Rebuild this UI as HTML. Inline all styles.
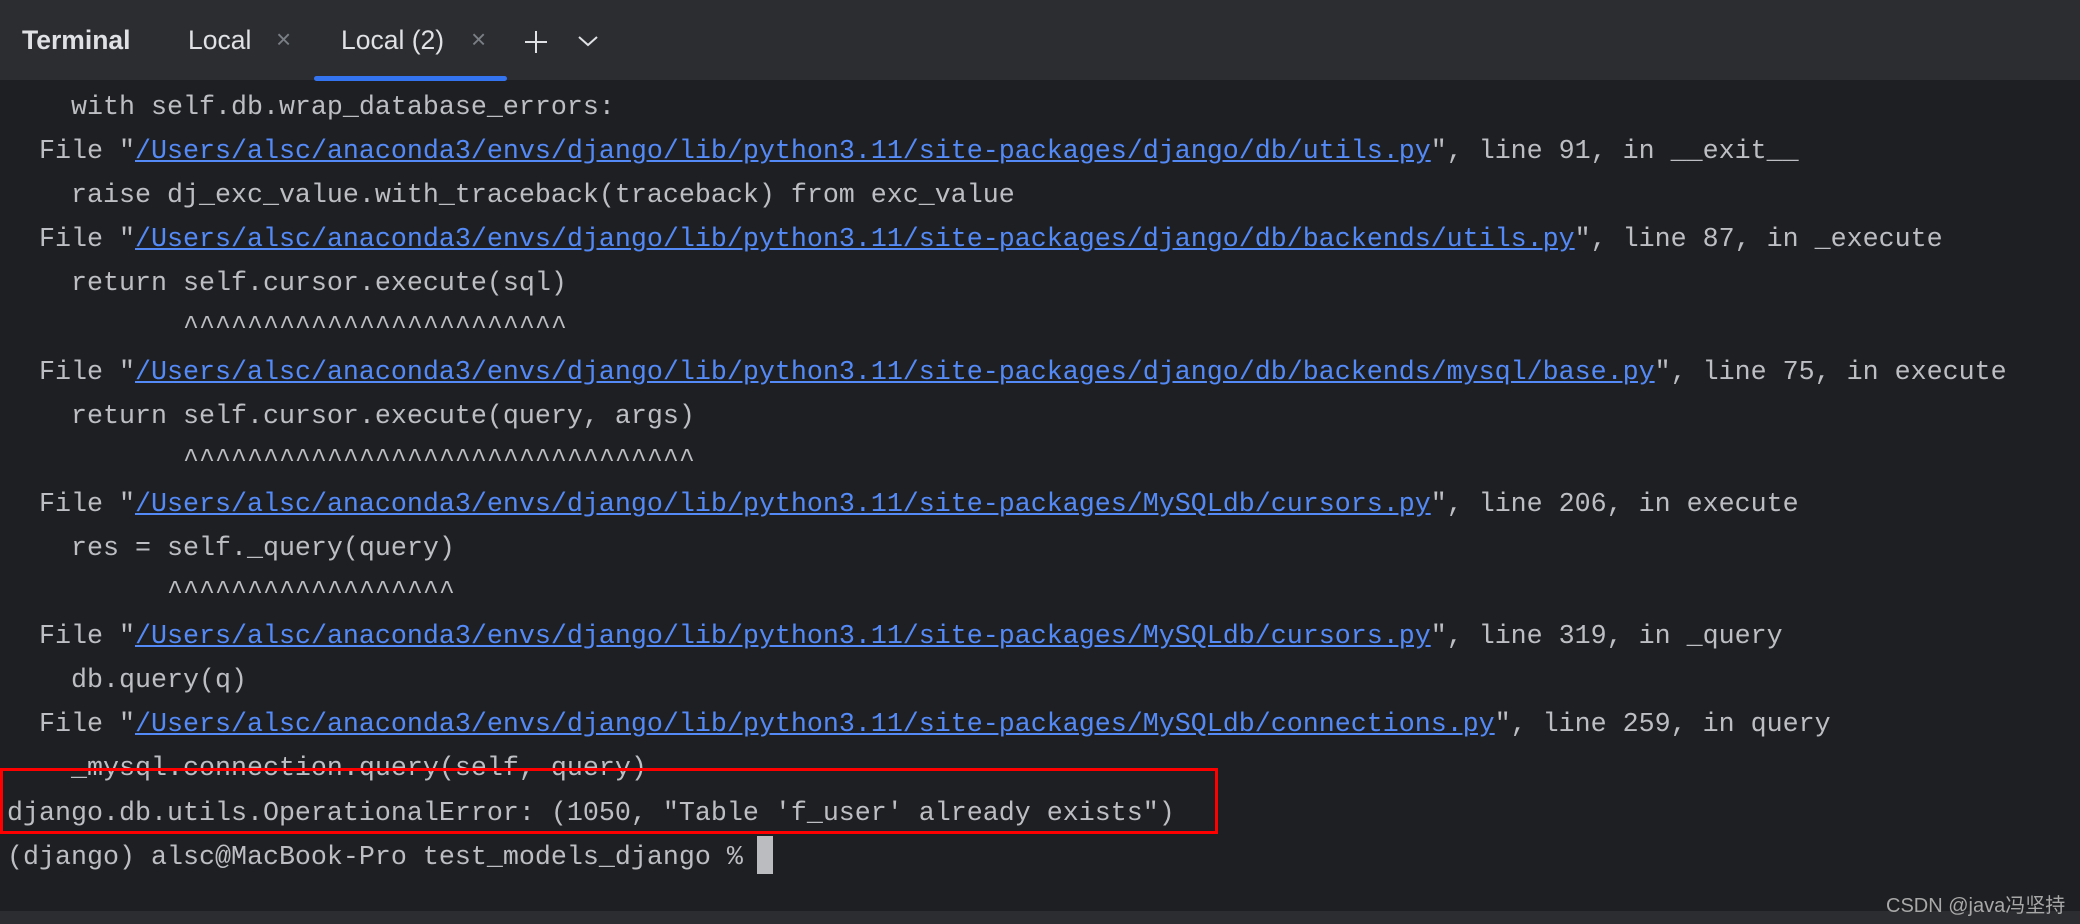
<!DOCTYPE html>
<html><head><meta charset="utf-8"><style>
html,body{margin:0;padding:0;width:2080px;height:924px;overflow:hidden;background:#1e1f22;}
#hdr{position:absolute;left:0;top:0;width:2080px;height:80px;background:#2b2d30;font-family:"Liberation Sans",sans-serif;color:#dfe1e5;}
#hdr .t{position:absolute;top:23px;font-size:26.5px;line-height:34px;white-space:nowrap;}
#hdr .x{color:#7a7e85;font-size:26px;}
#ul{position:absolute;left:314px;top:76px;width:193px;height:5px;border-radius:3px;background:#3574f0;}
#term{position:absolute;left:7px;top:86px;margin:0;font-family:"Liberation Mono",monospace;font-size:26.67px;line-height:44.1px;color:#bcbec4;white-space:pre;}
a{color:#548af7;text-decoration:underline;}
#box{position:absolute;left:0;top:768px;width:1212px;height:60px;border:3px solid #ff0000;}
#cur{position:absolute;left:757px;top:836px;width:16px;height:38px;background:#bbbcbf;}
#bot{position:absolute;left:0;top:911px;width:2080px;height:13px;background:#2b2d30;}
#wm{position:absolute;left:1886px;top:889px;font-family:"Liberation Sans","Noto Sans CJK SC",sans-serif;font-size:20px;color:#a8a8a8;white-space:nowrap;}
</style></head><body>
<div id="hdr">
<div class="t" style="left:22px;font-weight:bold;">Terminal</div>
<div class="t" style="left:188px;">Local</div>
<div class="t x" style="left:276px;top:22px;">×</div>
<div class="t" style="left:341px;">Local (2)</div>
<div class="t x" style="left:471px;top:22px;">×</div>
<svg style="position:absolute;left:524px;top:30px" width="24" height="24" viewBox="0 0 24 24"><path d="M12 1V23M1 12H23" stroke="#dfe1e5" stroke-width="2"/></svg>
<svg style="position:absolute;left:577px;top:34px" width="22" height="14" viewBox="0 0 22 14"><path d="M2 3L11 11L20 3" stroke="#dfe1e5" stroke-width="2" fill="none"/></svg>
<div id="ul"></div>
</div>
<pre id="term">    with self.db.wrap_database_errors:
  File "<a>/Users/alsc/anaconda3/envs/django/lib/python3.11/site-packages/django/db/utils.py</a>", line 91, in __exit__
    raise dj_exc_value.with_traceback(traceback) from exc_value
  File "<a>/Users/alsc/anaconda3/envs/django/lib/python3.11/site-packages/django/db/backends/utils.py</a>", line 87, in _execute
    return self.cursor.execute(sql)
           ^^^^^^^^^^^^^^^^^^^^^^^^
  File "<a>/Users/alsc/anaconda3/envs/django/lib/python3.11/site-packages/django/db/backends/mysql/base.py</a>", line 75, in execute
    return self.cursor.execute(query, args)
           ^^^^^^^^^^^^^^^^^^^^^^^^^^^^^^^^
  File "<a>/Users/alsc/anaconda3/envs/django/lib/python3.11/site-packages/MySQLdb/cursors.py</a>", line 206, in execute
    res = self._query(query)
          ^^^^^^^^^^^^^^^^^^
  File "<a>/Users/alsc/anaconda3/envs/django/lib/python3.11/site-packages/MySQLdb/cursors.py</a>", line 319, in _query
    db.query(q)
  File "<a>/Users/alsc/anaconda3/envs/django/lib/python3.11/site-packages/MySQLdb/connections.py</a>", line 259, in query
    _mysql.connection.query(self, query)
django.db.utils.OperationalError: (1050, "Table 'f_user' already exists")
(django) alsc@MacBook-Pro test_models_django % </pre>
<div id="box"></div>
<div id="cur"></div>
<div id="bot"></div>
<div id="wm">CSDN @java冯坚持</div>
</body></html>
